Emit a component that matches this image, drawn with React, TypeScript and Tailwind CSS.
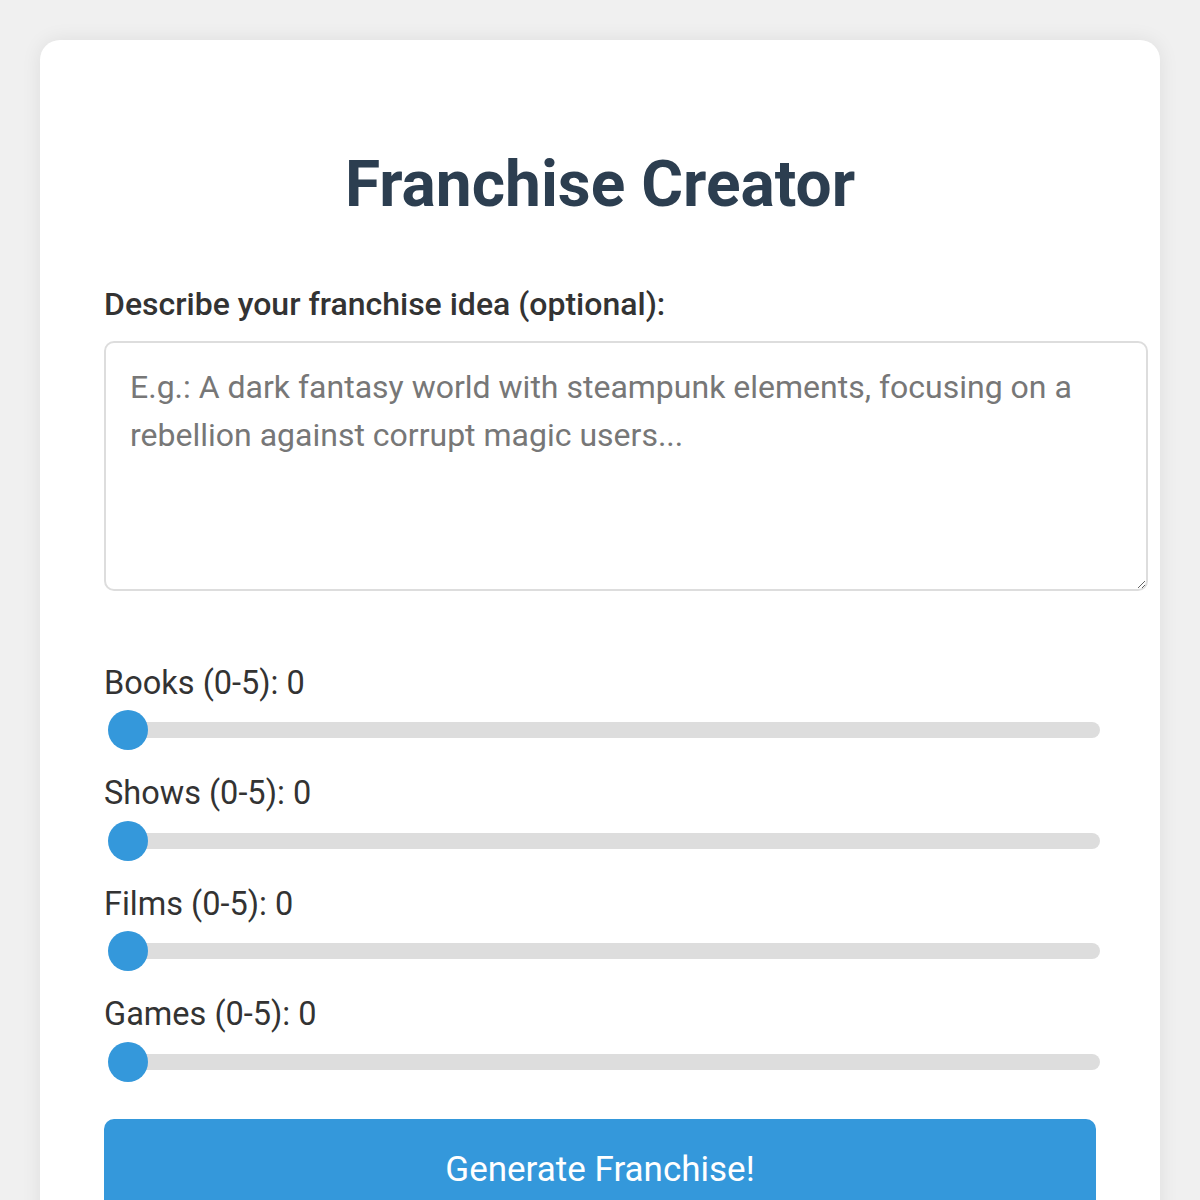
import React, { useState } from "react";

const sliders = [
  { key: "books", name: "Books" },
  { key: "shows", name: "Shows" },
  { key: "films", name: "Films" },
  { key: "games", name: "Games" },
];

const App = () => {
  const [idea, setIdea] = useState("");
  const [values] = useState<Record<string, number>>({
    books: 0,
    shows: 0,
    films: 0,
    games: 0,
  });

  return (
    <div className="min-h-[1200px] bg-[#f0f0f0] px-[40px] pt-[40px] font-['Roboto',sans-serif]">
      <main className="rounded-[20px] bg-white px-[64px] pt-[64px] pb-[64px] shadow-[0_0_20px_rgba(0,0,0,0.08)]">
        <h1 className="mt-[43px] mb-[64px] text-center text-[64px] font-bold leading-[75px] text-[#2c3e50]">
          Franchise Creator
        </h1>

        {/* idea input */}
        <div>
          <label className="block text-[32px] font-medium leading-[37.5px] text-[#333]">
            Describe your franchise idea (optional):
          </label>
          <textarea
            value={idea}
            onChange={(e) => setIdea(e.target.value)}
            placeholder="E.g.: A dark fantasy world with steampunk elements, focusing on a rebellion against corrupt magic users..."
            className="mt-[17px] box-border block h-[250px] w-[1044px] resize-y rounded-[10px] border-2 border-[#ddd] bg-white px-[24px] pt-[20px] text-[32px] leading-[48px] text-[#333] outline-none placeholder:text-[#777]"
          />
        </div>

        {/* sliders */}
        <div className="mt-[74px]">
          {sliders.map((item) => (
            <div key={item.key} className="mb-[25px]">
              <p className="text-[32.5px] leading-[37.5px] text-[#333]">
                {item.name} (0-5): {values[item.key]}
              </p>
              <div className="relative mt-[8px] flex h-[40px] w-[996px] items-center">
                <div className="ml-[6px] h-[16px] w-[990px] rounded-full bg-[#ddd]" />
                <div className="absolute left-[4px] top-0 h-[40px] w-[40px] rounded-full bg-[#3498db]" />
              </div>
            </div>
          ))}
        </div>

        <button className="mt-[37px] block h-[104px] w-full rounded-[10px] bg-[#3498db] text-[35px] text-white">
          Generate Franchise!
        </button>
      </main>
    </div>
  );
};

export default App;
